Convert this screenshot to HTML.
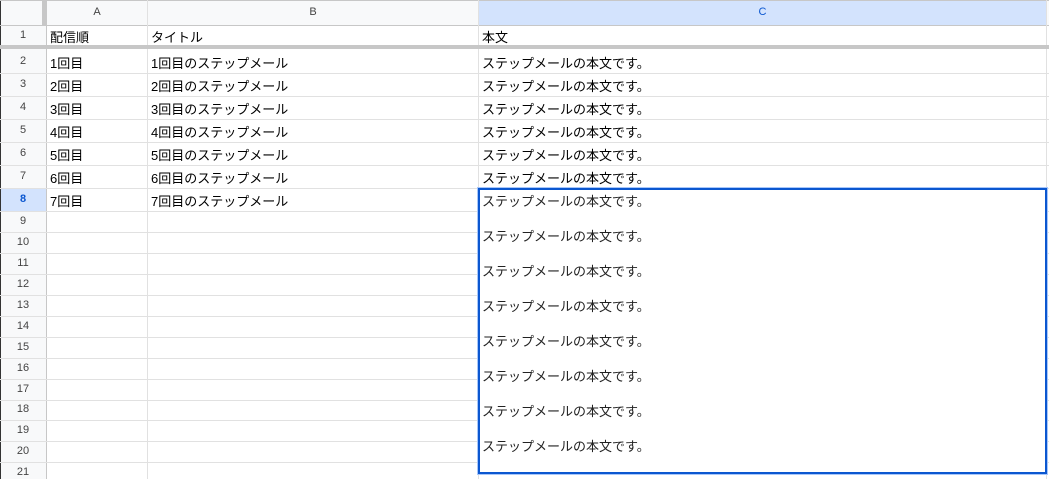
<!DOCTYPE html>
<html><head><meta charset="utf-8"><style>
body{margin:0;width:1049px;height:479px;overflow:hidden;background:#fff;position:relative;font-family:"Liberation Sans","Noto Sans CJK JP",sans-serif}
div{position:absolute;box-sizing:border-box}
.h{background:#f8f9fa;color:#444;font-size:11px;text-align:center}
.hl{background:#e1e1e1}
.vl{background:#e1e1e1;width:1px;top:0;height:479px}
.t{font-size:13px;color:#000;white-space:nowrap}
.rn{font-size:11px;color:#444;width:46px;text-align:center}
.e{font-size:13px;color:#222;left:482px;white-space:nowrap}
</style></head><body>
<div class="h" style="left:0;top:0;width:1049px;height:25px"></div>
<div style="left:478px;top:0;width:568px;height:25px;background:#d3e3fd"></div>
<div style="left:0;top:25px;width:46px;height:454px;background:#f8f9fa"></div>
<div style="left:0;top:188px;width:46px;height:23px;background:#d3e3fd"></div>
<div style="left:0;top:0;width:1px;height:479px;background:#333"></div>
<div style="left:42px;top:0;width:4px;height:25px;background:#c7c7c7"></div>
<div style="left:0;top:0;width:1049px;height:1px;background:#c7c7c7"></div>
<div style="left:0;top:25px;width:1049px;height:1px;background:#c7c7c7"></div>
<div class="vl" style="left:46px;background:#c7c7c7"></div>
<div class="vl" style="left:147px"></div>
<div class="vl" style="left:478px"></div>
<div class="vl" style="left:1046px"></div>
<div class="hl" style="left:0;top:73px;width:1049px;height:1px"></div>
<div class="hl" style="left:0;top:96px;width:1049px;height:1px"></div>
<div class="hl" style="left:0;top:119px;width:1049px;height:1px"></div>
<div class="hl" style="left:0;top:142px;width:1049px;height:1px"></div>
<div class="hl" style="left:0;top:165px;width:1049px;height:1px"></div>
<div class="hl" style="left:0;top:188px;width:1049px;height:1px"></div>
<div class="hl" style="left:0;top:211px;width:1049px;height:1px"></div>
<div class="hl" style="left:0;top:232px;width:1049px;height:1px"></div>
<div class="hl" style="left:0;top:253px;width:1049px;height:1px"></div>
<div class="hl" style="left:0;top:274px;width:1049px;height:1px"></div>
<div class="hl" style="left:0;top:295px;width:1049px;height:1px"></div>
<div class="hl" style="left:0;top:316px;width:1049px;height:1px"></div>
<div class="hl" style="left:0;top:337px;width:1049px;height:1px"></div>
<div class="hl" style="left:0;top:358px;width:1049px;height:1px"></div>
<div class="hl" style="left:0;top:379px;width:1049px;height:1px"></div>
<div class="hl" style="left:0;top:400px;width:1049px;height:1px"></div>
<div class="hl" style="left:0;top:420px;width:1049px;height:1px"></div>
<div class="hl" style="left:0;top:441px;width:1049px;height:1px"></div>
<div class="hl" style="left:0;top:462px;width:1049px;height:1px"></div>
<div style="left:0;top:45px;width:1049px;height:4px;background:#c7c7c7"></div>
<div class="h" style="left:47px;top:6px;width:100px;background:none">A</div>
<div class="h" style="left:148px;top:6px;width:330px;background:none">B</div>
<div class="h" style="left:479px;top:6px;width:567px;background:none;color:#0b57d0">C</div>
<div class="rn" style="top:29px">1</div>
<div class="rn" style="top:55px">2</div>
<div class="rn" style="top:78px">3</div>
<div class="rn" style="top:101px">4</div>
<div class="rn" style="top:124px">5</div>
<div class="rn" style="top:147px">6</div>
<div class="rn" style="top:170px">7</div>
<div class="rn" style="top:193px;font-weight:bold;color:#0b57d0">8</div>
<div class="rn" style="top:215px">9</div>
<div class="rn" style="top:236px">10</div>
<div class="rn" style="top:257px">11</div>
<div class="rn" style="top:278px">12</div>
<div class="rn" style="top:299px">13</div>
<div class="rn" style="top:320px">14</div>
<div class="rn" style="top:341px">15</div>
<div class="rn" style="top:362px">16</div>
<div class="rn" style="top:383px">17</div>
<div class="rn" style="top:403px">18</div>
<div class="rn" style="top:424px">19</div>
<div class="rn" style="top:445px">20</div>
<div class="rn" style="top:466px">21</div>
<div class="t" style="left:50px;top:27px">配信順</div>
<div class="t" style="left:151px;top:27px">タイトル</div>
<div class="t" style="left:482px;top:27px">本文</div>
<div class="t" style="left:50px;top:53px">1回目</div><div class="t" style="left:151px;top:53px">1回目のステップメール</div><div class="t" style="left:482px;top:53px">ステップメールの本文です。</div>
<div class="t" style="left:50px;top:76px">2回目</div><div class="t" style="left:151px;top:76px">2回目のステップメール</div><div class="t" style="left:482px;top:76px">ステップメールの本文です。</div>
<div class="t" style="left:50px;top:99px">3回目</div><div class="t" style="left:151px;top:99px">3回目のステップメール</div><div class="t" style="left:482px;top:99px">ステップメールの本文です。</div>
<div class="t" style="left:50px;top:122px">4回目</div><div class="t" style="left:151px;top:122px">4回目のステップメール</div><div class="t" style="left:482px;top:122px">ステップメールの本文です。</div>
<div class="t" style="left:50px;top:145px">5回目</div><div class="t" style="left:151px;top:145px">5回目のステップメール</div><div class="t" style="left:482px;top:145px">ステップメールの本文です。</div>
<div class="t" style="left:50px;top:168px">6回目</div><div class="t" style="left:151px;top:168px">6回目のステップメール</div><div class="t" style="left:482px;top:168px">ステップメールの本文です。</div>
<div class="t" style="left:50px;top:191px">7回目</div><div class="t" style="left:151px;top:191px">7回目のステップメール</div>
<div style="left:477px;top:187px;width:571px;height:288px;border:1px solid #a8c7fa;background:#fff"></div>
<div style="left:478px;top:188px;width:569px;height:286px;border:2px solid #0b57d0"></div>
<div class="e" style="top:191px">ステップメールの本文です。</div>
<div class="e" style="top:226px">ステップメールの本文です。</div>
<div class="e" style="top:261px">ステップメールの本文です。</div>
<div class="e" style="top:296px">ステップメールの本文です。</div>
<div class="e" style="top:331px">ステップメールの本文です。</div>
<div class="e" style="top:366px">ステップメールの本文です。</div>
<div class="e" style="top:401px">ステップメールの本文です。</div>
<div class="e" style="top:436px">ステップメールの本文です。</div>
</body></html>
